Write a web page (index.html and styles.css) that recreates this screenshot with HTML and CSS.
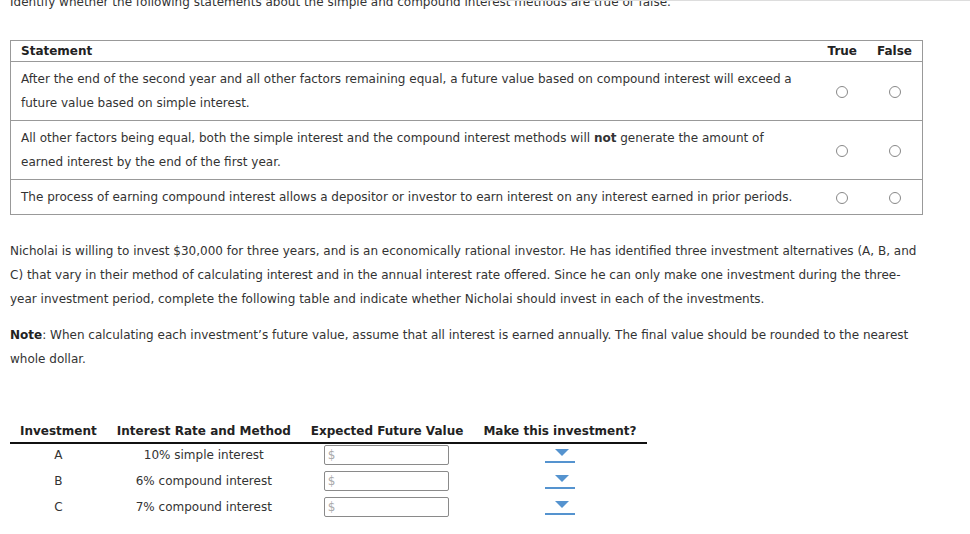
FILE: index.html
```html
<!DOCTYPE html>
<html>
<head>
<meta charset="utf-8">
<link rel="stylesheet" href="styles.css">
</head>
<body>
<div class="topline"></div>
<div class="page">
  <p class="intro">Identify whether the following statements about the simple and compound interest methods are true or false.</p>

  <table class="tf">
    <thead>
      <tr><th class="stmt">Statement</th><th class="opt">True</th><th class="opt">False</th></tr>
    </thead>
    <tbody>
      <tr>
        <td class="stmt">After the end of the second year and all other factors remaining equal, a future value based on compound interest will exceed a future value based on simple interest.</td>
        <td class="opt"><span class="radio"></span></td>
        <td class="opt"><span class="radio"></span></td>
      </tr>
      <tr>
        <td class="stmt">All other factors being equal, both the simple interest and the compound interest methods will <b>not</b> generate the amount of earned interest by the end of the first year.</td>
        <td class="opt"><span class="radio"></span></td>
        <td class="opt"><span class="radio"></span></td>
      </tr>
      <tr>
        <td class="stmt">The process of earning compound interest allows a depositor or investor to earn interest on any interest earned in prior periods.</td>
        <td class="opt"><span class="radio"></span></td>
        <td class="opt"><span class="radio"></span></td>
      </tr>
    </tbody>
  </table>

  <p class="para first">Nicholai is willing to invest $30,000 for three years, and is an economically rational investor. He has identified three investment alternatives (A, B, and C) that vary in their method of calculating interest and in the annual interest rate offered. Since he can only make one investment during the three-year investment period, complete the following table and indicate whether Nicholai should invest in each of the investments.</p>
  <p class="para"><b>Note</b>: When calculating each investment’s future value, assume that all interest is earned annually. The final value should be rounded to the nearest whole dollar.</p>

  <table class="inv">
    <thead>
      <tr><th>Investment</th><th>Interest Rate and Method</th><th>Expected Future Value</th><th>Make this investment?</th></tr>
    </thead>
    <tbody>
      <tr>
        <td>A</td><td>10% simple interest</td>
        <td><span class="money">$</span></td>
        <td><span class="dd"><svg width="30" height="14" viewBox="0 0 30 14"><path d="M10 0h14l-7 7z" fill="#5593cf"/><rect x="0" y="12" width="30" height="2" fill="#5593cf"/></svg></span></td>
      </tr>
      <tr>
        <td>B</td><td>6% compound interest</td>
        <td><span class="money">$</span></td>
        <td><span class="dd"><svg width="30" height="14" viewBox="0 0 30 14"><path d="M10 0h14l-7 7z" fill="#5593cf"/><rect x="0" y="12" width="30" height="2" fill="#5593cf"/></svg></span></td>
      </tr>
      <tr>
        <td>C</td><td>7% compound interest</td>
        <td><span class="money">$</span></td>
        <td><span class="dd"><svg width="30" height="14" viewBox="0 0 30 14"><path d="M10 0h14l-7 7z" fill="#5593cf"/><rect x="0" y="12" width="30" height="2" fill="#5593cf"/></svg></span></td>
      </tr>
    </tbody>
  </table>
</div>
</body>
</html>
```

FILE: styles.css
```css
html, body {
  margin: 0;
  padding: 0;
  background: #fff;
}
body {
  font-family: "DejaVu Sans", Verdana, sans-serif;
  font-size: 12px;
  color: #333;
  line-height: 24px;
  overflow: hidden;
}
.topline {
  position: absolute;
  top: 0;
  left: 480px;
  right: 0;
  height: 1px;
  background: #ddd;
}
.page {
  width: 913px;
  padding-left: 10px;
}
.intro {
  margin: -10px 0 26px;
}
.tf {
  width: 100%;
  border-collapse: collapse;
  border: 1px solid #999;
}
.tf th {
  font-weight: bold;
  color: #222;
  line-height: 16px;
  padding: 2px 10px;
  border-bottom: 1px solid #999;
  text-align: left;
}
.tf th.opt {
  text-align: center;
}
.tf td {
  padding: 5px 10px;
  border-bottom: 1px solid #999;
  vertical-align: middle;
}
.tf td.opt {
  text-align: center;
  white-space: nowrap;
}
.radio {
  display: inline-block;
  width: 12px;
  height: 12px;
  border: 1px solid #888;
  border-radius: 50%;
  box-sizing: border-box;
  vertical-align: middle;
}
.para {
  margin: 0 0 12px;
}
.para.first {
  margin-top: 24px;
}
.para b {
  color: #222;
}
.inv {
  border-collapse: collapse;
  margin-top: 50px;
}
.inv th {
  font-weight: bold;
  color: #222;
  line-height: 18px;
  padding: 1px 10px 2px;
  border-bottom: 2px solid #111;
  white-space: nowrap;
}
.inv td {
  text-align: center;
  line-height: 20px;
  padding: 3px 10px;
  white-space: nowrap;
}
.inv tbody tr:first-child td {
  padding-top: 1px;
}
.money {
  display: block;
  width: 125px;
  height: 20px;
  box-sizing: border-box;
  border: 1px solid #8a8a8a;
  border-radius: 2px;
  text-align: left;
  padding-left: 3px;
  color: #aaa;
  font-size: 12px;
  line-height: 18px;
  margin-left: 13px;
}
.dd {
  display: inline-block;
  vertical-align: middle;
  line-height: 0;
}
```
